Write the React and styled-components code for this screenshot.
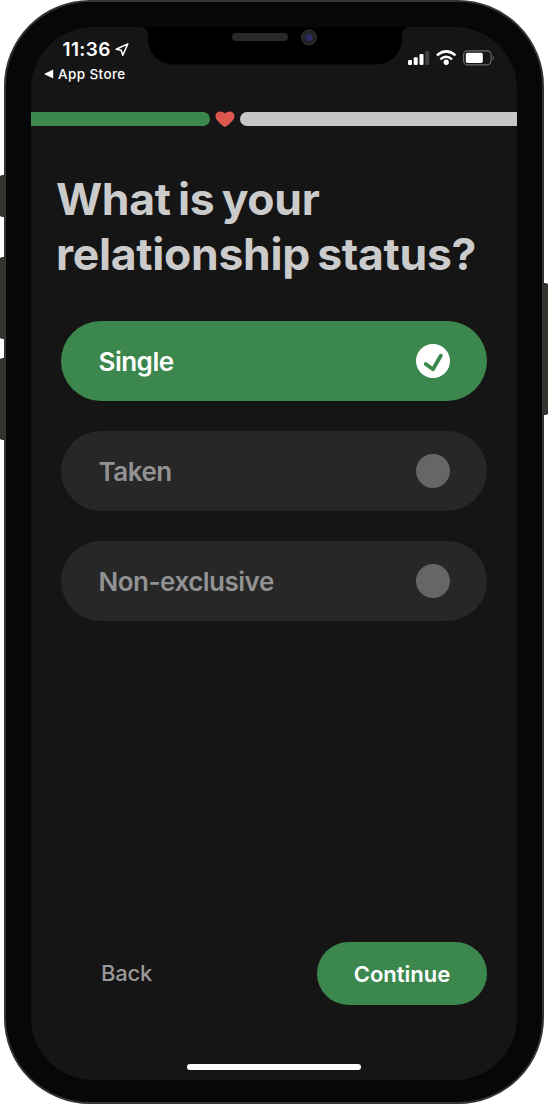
import React, { useState } from "react";
import styled, { createGlobalStyle } from "styled-components";

const options = ["Single", "Taken", "Non-exclusive"];

const App = () => {
  const [selected, setSelected] = useState("Single");
  return (
    <>
      <GlobalStyle />
      <Phone>
        <SideButton $top={175} $height={42} />
        <SideButton $top={257} $height={82} />
        <SideButton $top={358} $height={82} />
        <SideButton $right $top={283} $height={132} />
        <Body>
          <Screen>
            <Notch />
            <StatusBar>
              <div>
                <Time>
                  11:36 <LocationIcon />
                </Time>
                <BackToStore>
                  <StoreArrow /> <span>App Store</span>
                </BackToStore>
              </div>
              <StatusIcons />
            </StatusBar>
            <Progress>
              <ProgressDone />
              <Heart />
              <ProgressLeft />
            </Progress>
            <Content>
              <Title>
                What is your
                <br />
                relationship status?
              </Title>
              <OptionList>
                {options.map((option) => (
                  <Option
                    key={option}
                    $active={option === selected}
                    onClick={() => setSelected(option)}
                  >
                    {option}
                    <Radio $active={option === selected}>
                      {option === selected && <Check />}
                    </Radio>
                  </Option>
                ))}
              </OptionList>
              <Actions>
                <BackBtn>Back</BackBtn>
                <ContinueBtn>Continue</ContinueBtn>
              </Actions>
            </Content>
            <HomeIndicator />
          </Screen>
        </Body>
      </Phone>
    </>
  );
};
export default App;

const Notch = () => (
  <StyleNotch width="270" height="38" viewBox="0 0 270 38">
    <path
      d="M0 0H270C265 0 262 3 262 8V11C262 27 251 37.500 235 37.500H35C19 37.500 8 27 8 11V8C8 3 5 0 0 0Z"
      fill="#000"
    />
    <rect x="92" y="6" width="56" height="8" rx="4" fill="#2a2928" />
    <circle cx="169" cy="10.500" r="7.500" fill="#222221" stroke="#343433" />
    <circle cx="169" cy="10.500" r="3.700" fill="#292a61" />
  </StyleNotch>
);

const LocationIcon = () => (
  <svg width="14" height="14" viewBox="0 0 14 14">
    <path
      d="M12.800 0.900L1.200 6.300L6.200 7.200L7.800 12.300Z"
      fill="none"
      stroke="#fff"
      strokeWidth="1.500"
      strokeLinejoin="round"
    />
  </svg>
);

const StoreArrow = () => (
  <svg width="10" height="10" viewBox="0 0 10 10">
    <path d="M0 5L9.200 0.500V9.500Z" fill="#fff" />
  </svg>
);

const StatusIcons = () => (
  <svg width="88" height="18" viewBox="407 49 88 18">
    <g fill="#fff">
      <rect x="408" y="60" width="4" height="5" rx="1" />
      <rect x="413.700" y="57.300" width="4" height="7.700" rx="1" />
      <rect x="419.500" y="54" width="4" height="11" rx="1" />
      <rect x="425.200" y="51" width="4" height="14" rx="1" fill="#424242" />
      <circle cx="446.200" cy="62.200" r="2.600" />
      <path d="M443.700 62.800L446.200 65.300L448.700 62.800Z" />
      <rect x="465.800" y="52.800" width="17" height="10.200" rx="1.800" />
    </g>
    <g fill="none" stroke="#fff" strokeWidth="2.500">
      <path d="M436.900 55.400Q446.200 47.400 455.500 55.400" />
      <path d="M440.400 59.400Q446.200 54.200 452 59.400" />
    </g>
    <rect
      x="463.600"
      y="50.800"
      width="27.500"
      height="14"
      rx="4"
      fill="none"
      stroke="#6c6c6c"
      strokeWidth="1.200"
    />
    <path d="M492.800 55.500Q495 57.800 492.800 60.200Z" fill="#777" />
  </svg>
);

const Heart = () => (
  <svg width="20" height="17" viewBox="0 0 20 17">
    <path
      d="M10 16C8.300 15.300 0.500 9.500 0.500 5.200C0.500 -0.200 7.300 -0.800 10 2.600C12.700 -0.800 19.500 -0.200 19.500 5.200C19.500 9.500 11.700 15.300 10 16Z"
      fill="#de574d"
    />
  </svg>
);

const Check = () => (
  <svg width="34" height="34" viewBox="0 0 34 34">
    <path
      d="M9.700 20L17 25.300L24.800 11.700"
      fill="none"
      stroke="#3c874d"
      strokeWidth="3.800"
      strokeLinecap="round"
      strokeLinejoin="round"
    />
  </svg>
);

const GlobalStyle = createGlobalStyle`
  * {
    box-sizing: border-box;
  }
  body {
    margin: 0;
    background: #fff;
    overflow: hidden;
    font-family: Inter, "Liberation Sans", sans-serif;
  }
  button {
    border: none;
    padding: 0;
    font-family: inherit;
    cursor: pointer;
  }
  svg {
    display: block;
    flex: none;
  }
`;
const Phone = styled.div`
  position: relative;
  width: 548px;
  height: 1104px;
  padding: 0 4px;
  overflow: hidden;
`;
const SideButton = styled.div`
  position: absolute;
  top: ${(p) => p.$top}px;
  ${(p) => (p.$right ? "right" : "left")}: -1px;
  width: 9px;
  height: ${(p) => p.$height}px;
  border-radius: 4px;
  background: #35332e;
`;
const Body = styled.div`
  position: relative;
  height: 100%;
  padding: 25px 25px 22px;
  border: 2px solid #35342f;
  border-radius: 86px;
  background: #050708;
`;
const Screen = styled.main`
  position: relative;
  display: flex;
  flex-direction: column;
  height: 1053px;
  border-radius: 62px;
  background: #151515;
  overflow: hidden;
`;
const StyleNotch = styled.svg`
  position: absolute;
  top: 0;
  left: 109px;
`;
const StatusBar = styled.header`
  display: flex;
  justify-content: space-between;
  height: 84px;
  padding: 11px 22px 0 13px;
  color: #fff;
  > svg {
    margin-top: 11px;
  }
`;
const Time = styled.div`
  display: flex;
  align-items: center;
  gap: 4px;
  padding-left: 18.500px;
  font-size: 19px;
  font-weight: 600;
  line-height: 24px;
  letter-spacing: 0.4px;
`;
const BackToStore = styled.div`
  display: flex;
  align-items: center;
  gap: 4px;
  font-size: 13.500px;
  font-weight: 500;
  line-height: 24px;
  letter-spacing: 0.4px;
`;
const Progress = styled.div`
  display: flex;
  align-items: center;
  gap: 5px;
  height: 17px;
`;
const ProgressDone = styled.div`
  width: 179px;
  height: 14px;
  margin-bottom: 2px;
  border-radius: 0 7px 7px 0;
  background: #3c874d;
`;
const ProgressLeft = styled.div`
  flex: 1;
  height: 14px;
  margin-bottom: 1px;
  border-radius: 7px 0 0 7px;
  background: #c7c7c7;
`;
const Content = styled.section`
  display: flex;
  flex-direction: column;
  flex: 1;
  padding: 44px 30px 59px;
`;
const Title = styled.h1`
  margin: 0 -10px 39px -5px;
  color: #cbcbcb;
  font-size: 44.500px;
  font-weight: 700;
  line-height: 55px;
  letter-spacing: -0.3px;
  word-spacing: -3px;
  white-space: nowrap;
`;
const OptionList = styled.div`
  display: flex;
  flex-direction: column;
  gap: 30px;
`;
const Option = styled.button`
  display: flex;
  align-items: center;
  justify-content: space-between;
  height: 80px;
  padding: 0 37.500px;
  border-radius: 40px;
  background: ${(p) => (p.$active ? "#3c874d" : "#272727")};
  color: ${(p) => (p.$active ? "#fff" : "#929292")};
  font-size: 26px;
  font-weight: 600;
  letter-spacing: -0.5px;
`;
const Radio = styled.span`
  width: 34px;
  height: 34px;
  border-radius: 50%;
  background: ${(p) => (p.$active ? "#fff" : "#666")};
`;
const Actions = styled.div`
  display: flex;
  align-items: center;
  justify-content: space-between;
  margin-top: auto;
`;
const BackBtn = styled.button`
  margin: 0 0 2px 40px;
  background: none;
  color: #999;
  font-size: 22px;
  font-weight: 500;
  letter-spacing: -0.2px;
`;
const ContinueBtn = styled.button`
  width: 170px;
  height: 63px;
  border-radius: 32px;
  background: #3c874d;
  color: #fff;
  font-size: 22px;
  font-weight: 600;
`;
const HomeIndicator = styled.div`
  width: 174px;
  height: 6px;
  margin: 0 auto 10px;
  border-radius: 3px;
  background: #fff;
`;
